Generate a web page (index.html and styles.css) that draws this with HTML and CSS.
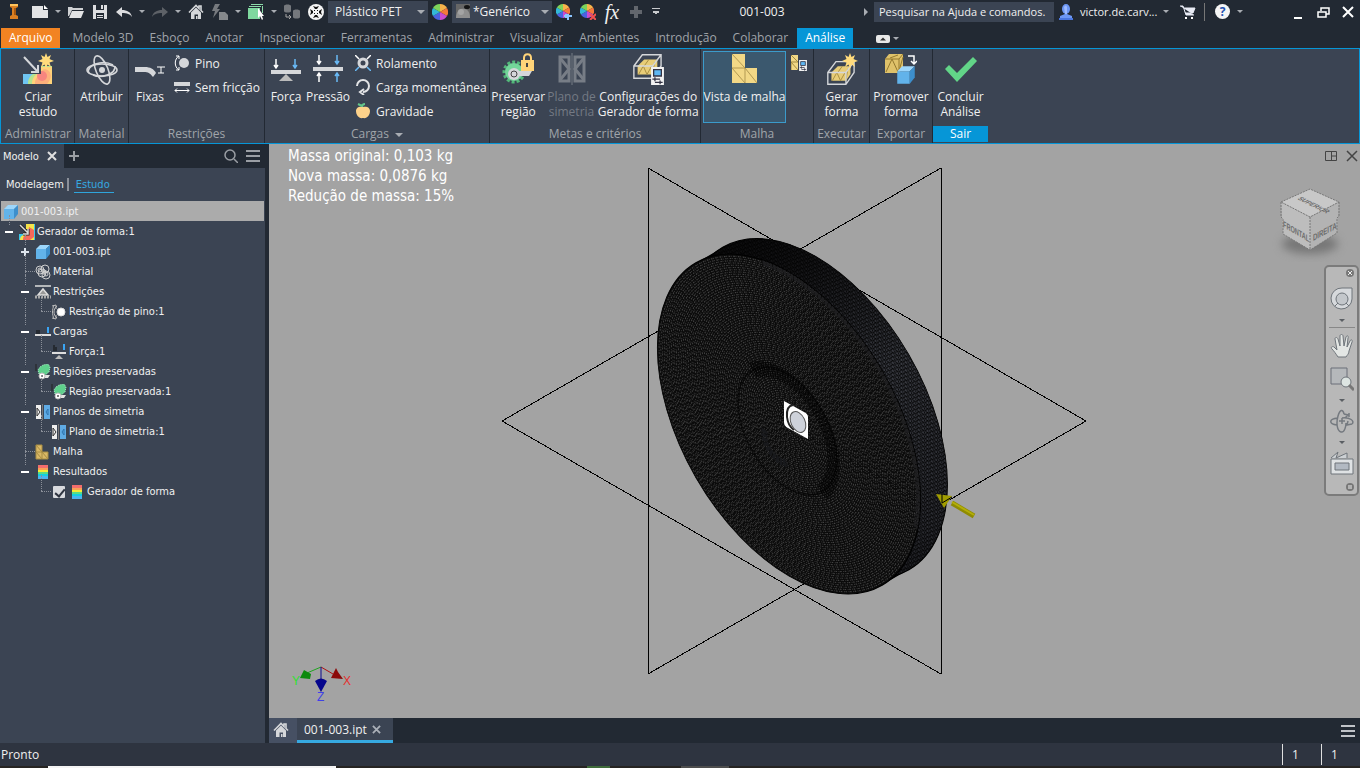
FILE: index.html
```html
<!DOCTYPE html>
<html lang="pt-BR">
  <head>
    <meta charset="UTF-8" />
    <title>001-003</title>
    <link rel="stylesheet" href="styles.css">
  </head>
  <body>
    <svg class="sprite" aria-hidden="true">
      <symbol id="i-home" viewBox="0 0 16 16">
        <path d="M1 8.5L8 1.5l3 3V2h2v4.500l2 2" fill="none" stroke="#d5d7da" stroke-width="1.600" />
        <path d="M3 8.500l5-5 5 5V15h-3v-4.500H6.500V15H3z" fill="#d5d7da" />
        <path d="M8 12h1.500v3H8z" fill="#d5d7da" />
      </symbol>
      <symbol id="i-wheel" viewBox="0 0 16 16">
        <path d="M8 8V0a8 8 0 0 1 7 4z" fill="#f7b34a" />
        <path d="M8 8l7-4a8 8 0 0 1 0 8z" fill="#f4783c" />
        <path d="M8 8l7 4a8 8 0 0 1-7 4z" fill="#c94bd0" />
        <path d="M8 8v8a8 8 0 0 1-7-4z" fill="#4b62e0" />
        <path d="M8 8l-7 4a8 8 0 0 1 0-8z" fill="#33b8d8" />
        <path d="M8 8L1 4a8 8 0 0 1 7-4z" fill="#7dd35a" />
      </symbol>
      <symbol id="i-cube" viewBox="0 0 16 16">
        <path d="M1 5h10v10H1z" fill="#62b3ea" />
        <path d="M1 5l4-4h10l-4 4z" fill="#9cd6fb" />
        <path d="M11 5l4-4v9l-4 5z" fill="#3d8fcc" />
      </symbol>
      <symbol id="i-rainbow" viewBox="0 0 16 16">
        <path d="M3 1h10v3H3z" fill="#f26d6d" />
        <path d="M3 4h10v2H3z" fill="#f9a255" />
        <path d="M3 6h10v2H3z" fill="#f6ea35" />
        <path d="M3 8h10v2H3z" fill="#59dd86" />
        <path d="M3 10h10v2H3z" fill="#13cfe0" />
        <path d="M3 12h10v3H3z" fill="#4ab4f0" />
      </symbol>
      <symbol id="i-gear" viewBox="0 0 16 16">
        <path d="M4 10L3 6l2-3 3-2 5-1 2 3-1 5-4 3-2-2z" fill="#5fd08c" stroke="#a8ecc4" stroke-dasharray="1 1" />
        <path d="M1 0v7" stroke="#222" />
        <path d="M8 11h7l-2 3H8z" fill="#e4e4e4" />
        <circle cx="7" cy="12" r="3" fill="#fff" stroke="#bbb" />
        <circle cx="7" cy="12" r="1" fill="#555" />
      </symbol>
      <symbol id="i-mirror" viewBox="0 0 16 16">
        <path d="M1 1h5v14H1z" fill="#eee" />
        <path d="M2 4l3 4-3 4z" fill="none" stroke="#333" />
        <path d="M7.500 0v16" stroke="#777" />
        <path d="M9 1h6v14H9z" fill="#5fabe5" />
        <path d="M13 5v6l-2-3z" fill="none" stroke="#2f75b0" />
      </symbol>
      <symbol id="i-load" viewBox="0 0 16 16">
        <path d="M1 8h14v2H1z" fill="#ddd" />
        <path d="M3 1v6M5 3v4" stroke="#111" />
        <path d="M13 0v6" stroke="#3aa5f5" stroke-width="2" />
        <path d="M4 15l4-4 4 4z" fill="#bbb" />
      </symbol>
      <symbol id="i-spark" viewBox="0 0 16 16">
        <path d="M8 0l1.500 4L13 2l-1.500 4L16 8l-4.500 1.500L13 14l-3.500-2.500L8 16l-1.500-4.500L3 14l1.500-4.500L0 8l4.500-2L3 2l3.500 2z" fill="#ffdb7c" />
      </symbol>
      <symbol id="i-crate" viewBox="0 0 32 32">
        <path d="M6 16L13 9h14l-5 7zM6 16h16v9H6zM22 16l5-7v9l-5 7z" fill="#e8cd78" />
        <path d="M7 25l5-9 4 9 5-9M13 16l5-7M22 25l2-13" fill="none" stroke="#a48a3e" />
        <path d="M2 16L11 4h20v12l-9 13H2zM2 16h20L31 4M22 16v13" fill="none" stroke="#d5d7da" stroke-width="1.500" />
      </symbol>
      <symbol id="i-mesh" viewBox="0 0 32 32">
        <path d="M3 1h13v14h12v15H3z" fill="#f2d886" />
        <path d="M3 1l13 14H3l13 15V15l12 15" fill="none" stroke="#b39a52" />
      </symbol>
      <symbol id="i-panel" viewBox="0 0 10 14">
        <path d="M0 0h10v14H0z" fill="#f2f2f2" />
        <path d="M2 2h6v5H2z" fill="#5eb7f2" stroke="#334" />
        <path d="M1 9.500h6M3 12h6M3 8v3M7 10.500v3" stroke="#334" />
      </symbol>
    </svg>

    <header class="titlebar">
      <div class="quick">
        <button class="logo" aria-label="Inventor">
          <svg viewBox="0 0 16 20"><path d="M4 3h8v3l-2 1v7l2 1v3H4v-3l2-1V7L4 6z" fill="#dc8022" /><path d="M4 3h8v2H4z" fill="#ffc45c" /><path d="M8 7h2v7H8z" fill="#a8580e" /></svg>
        </button>
        <button class="tool" aria-label="Novo"><svg viewBox="0 0 16 16"><path d="M0 2h11v4h5v8H0z" fill="#e2e3e5" /><path d="M12 1l4 4h-4z" fill="#fff" /></svg></button>
        <button class="caret" aria-label="Mais"></button>
        <button class="tool" aria-label="Abrir"><svg viewBox="0 0 16 16"><path d="M0 3h4l1 1h10v2H4L1 12H0z" fill="#cfd1d4" /><path d="M4 7h12l-3 7H1z" fill="#e2e3e5" /></svg></button>
        <button class="tool" aria-label="Salvar"><svg viewBox="0 0 16 16"><path d="M1 1h14v14H1z" fill="#dcdde0" /><path d="M4 1h8v5H4zM4 9h8v6H4z" fill="#222933" /><path d="M9 1h2v4H9zM5 11h6v1H5zM5 13h6v1H5z" fill="#dcdde0" /></svg></button>
        <button class="tool" aria-label="Desfazer"><svg viewBox="0 0 16 16"><path d="M0 8l6-5v3c5 0 9 2 10 7-2-3-5-4-10-4v4z" fill="#dcdde0" /></svg></button>
        <button class="caret" aria-label="Mais"></button>
        <button class="tool" aria-label="Refazer"><svg viewBox="0 0 16 16"><path d="M16 8l-6-5v3C5 6 1 8 0 13c2-3 5-4 10-4v4z" fill="#5d6167" /></svg></button>
        <button class="caret" aria-label="Mais"></button>
        <button class="tool" aria-label="Início"><svg><use href="#i-home" /></svg></button>
        <button class="tool" aria-label="Atualizar"><svg viewBox="0 0 16 16"><path d="M3 0h5L5 5h3L1 14l2-7H0z" fill="#777a7f" /><path d="M7 8h6l3 3v5H7z" fill="#85888c" /></svg></button>
        <button class="caret" aria-label="Mais"></button>
        <button class="tool" aria-label="Selecionar"><svg viewBox="0 0 16 16"><path d="M3 0h12v1H3zM1 2h12v1H1zM14 2h1v7h-1z" fill="#8cdcaa" /><path d="M0 4h12v11H0z" fill="#7fd99f" /><path d="M10 4v10l2-2 2 4 1-1-1-3h2z" fill="#fff" /></svg></button>
        <button class="caret" aria-label="Mais"></button>
        <button class="tool" aria-label="Banco de dados"><svg viewBox="0 0 16 16"><path d="M0 2c0-2 7-2 7 0v5c0 2-7 2-7 0zM9 7c0-2 7-2 7 0v6c0 2-7 2-7 0z" fill="#75787d" /><path d="M2 10v3h5M5 11l2 2-2 2" fill="none" stroke="#aaa" /></svg></button>
        <button class="tool" aria-label="Materiais"><svg viewBox="0 0 16 16"><circle cx="8" cy="8" r="8" fill="#f5f5f5" /><path d="M5 2l3 1 3-1-2 3H7zM5 14l3-1 3 1-2-3H7zM2 5l1 3-1 3 3-2V7zM14 5l-1 3 1 3-3-2V7zM6 6h1v1H6zM9 6h1v1H9zM6 9h1v1H6zM9 9h1v1H9z" fill="#111" /></svg></button>
        <label class="picker"><select aria-label="Material"><option>Plástico PET</option></select></label>
        <button class="tool" aria-label="Aparência"><svg><use href="#i-wheel" /></svg></button>
        <label class="picker with-swatch">
          <svg class="swatch" viewBox="0 0 14 14"><path d="M0 0h14v14H0z" fill="#666" /><path d="M0 14C0 6 5 4 9 5s5 5 5 9z" fill="#8f8f8f" /><circle cx="5" cy="8" r="3" fill="#a4a4a4" /><ellipse cx="11" cy="3" rx="3" ry="2" fill="#151515" /></svg>
          <select aria-label="Aparência"><option>*Genérico</option></select>
        </label>
        <button class="tool" aria-label="Ajustar"><svg viewBox="0 0 16 16"><use href="#i-wheel" width="14" height="14" /><path d="M8 12h8M12 10v6M10 10v4" stroke="#8bc4ff" stroke-width="2" /></svg></button>
        <button class="tool" aria-label="Limpar"><svg viewBox="0 0 16 16"><use href="#i-wheel" width="14" height="14" /><path d="M10 10l6 6M16 10l-6 6" stroke="#f15050" stroke-width="2" /></svg></button>
        <button class="tool fx" aria-label="Parâmetros">fx</button>
        <button class="tool" aria-label="Adicionar"><svg viewBox="0 0 16 16"><path d="M6 2h4v4h4v4h-4v4H6v-4H2V6h4z" fill="#62666d" /></svg></button>
        <button class="caret lined" aria-label="Personalizar"></button>
      </div>
      <div class="doc-title">001-003</div>
      <div class="account">
        <button class="caret right" aria-label="Expandir"></button>
        <input class="help-search" type="text" value="Pesquisar na Ajuda e comandos." aria-label="Pesquisar" />
        <svg class="user-icon" viewBox="0 0 16 16"><path d="M2 12l5-2h2l5 2v3H2z" fill="#6d97f5" /><ellipse cx="8" cy="5" rx="4" ry="5" fill="#6d97f5" /><path d="M6 3q2-3 3 0v7H7z" fill="#9dbaff" /><path d="M1 14h14v2H1z" fill="#4a76e0" /></svg>
        <button class="user">victor.de.carv...</button>
        <button class="caret" aria-label="Conta"></button>
        <button class="tool cart" aria-label="Loja"><svg viewBox="0 0 16 16"><path d="M0 2h3l3 9h8M4 4h11l-2 5H5" fill="#e8ebf5" stroke="#e8ebf5" /><path d="M5 13h2v2H5zM11 13h2v2h-2z" fill="#fff" /></svg></button>
        <span class="divider"></span>
        <button class="help" aria-label="Ajuda">?</button>
        <button class="caret" aria-label="Mais ajuda"></button>
        <div class="window-buttons">
          <button aria-label="Minimizar"><svg viewBox="0 0 16 16"><path d="M4 13h8v2H4z" fill="#fff" /></svg></button>
          <button aria-label="Restaurar"><svg viewBox="0 0 16 16"><path d="M6 7V4h8v6h-3M3 8h8v5H3z" fill="none" stroke="#fff" stroke-width="1.500" /></svg></button>
          <button aria-label="Fechar"><svg viewBox="0 0 16 16"><path d="M3 3l10 10M13 3L3 13" stroke="#fff" stroke-width="2" /></svg></button>
        </div>
      </div>
    </header>

    <nav class="tabs">
      <a class="tab file" href="#">Arquivo</a>
      <a class="tab" href="#">Modelo 3D</a>
      <a class="tab" href="#">Esboço</a>
      <a class="tab" href="#">Anotar</a>
      <a class="tab" href="#">Inspecionar</a>
      <a class="tab" href="#">Ferramentas</a>
      <a class="tab" href="#">Administrar</a>
      <a class="tab" href="#">Visualizar</a>
      <a class="tab" href="#">Ambientes</a>
      <a class="tab" href="#">Introdução</a>
      <a class="tab" href="#">Colaborar</a>
      <a class="tab active" href="#">Análise</a>
      <button class="collapse" aria-label="Recolher"><svg viewBox="0 0 14 8"><rect width="14" height="8" rx="2" fill="#e8e8e8" /><path d="M4 5.500l3-3 3 3z" fill="#333" /></svg></button>
      <button class="caret" aria-label="Mais"></button>
    </nav>

    <section class="ribbon">
      <div class="group g-admin">
        <div class="tools">
          <button class="big"><svg viewBox="0 0 32 32"><path d="M1 21h18v-8h11v18H1z" fill="#6fc6f3" /><path d="M6 31c0-5 2-8 5-10h8v-8h11v18z" fill="#b4e38f" /><path d="M10 31c0-5 2-8 5-10h4v-7h11v17z" fill="#ffd37a" /><path d="M13 31c0-4 1-7 6-10 0-5 4-6 8-3 3 4 2 9-2 13z" fill="#fdb07c" /><circle cx="20" cy="23" r="5" fill="#f7857f" /><path d="M1 12h18v9H1z" fill="#3b4453" /><path d="M2 4l13 14M16 12v7H9" fill="none" stroke="#d5d7da" stroke-width="2" /><use href="#i-spark" x="16" y="0" width="16" height="16" /></svg><span>Criar<br>estudo</span></button>
        </div>
        <h2>Administrar</h2>
      </div>
      <div class="group g-material">
        <div class="tools">
          <button class="big"><svg viewBox="0 0 32 32"><g fill="none" stroke="#d5d7da" stroke-width="1.600"><ellipse cx="16" cy="17" rx="15" ry="6" /><ellipse cx="16" cy="17" rx="15" ry="6" transform="rotate(68 16 17)" /><path d="M3 20c-4-7 13-14 24-8M7 22c8 4 23-1 22-9" /></g><circle cx="16" cy="17" r="3" fill="#d5d7da" /></svg><span>Atribuir</span></button>
        </div>
        <h2>Material</h2>
      </div>
      <div class="group g-constraints">
        <div class="tools">
          <button class="big"><svg viewBox="0 0 32 32"><path d="M1 14h10c5 0 9 2 11 6l-3 4c-3-4-5-5-9-5H1z" fill="#d5d7da" /><path d="M23 14h8M27 14v6M24 20h6" fill="none" stroke="#fff" /></svg><span>Fixas</span></button>
          <div class="stack">
            <button class="small"><svg viewBox="0 0 16 16"><circle cx="10" cy="8" r="5" fill="#d5d7da" /><path d="M5 1C0 4 0 12 5 15M2 1h3v3M2 15h3v-3" fill="none" stroke="#fff" /></svg>Pino</button>
            <button class="small"><svg viewBox="0 0 16 16"><path d="M0 3h16v4H0z" fill="#d5d7da" /><path d="M1 11.500h14M3 9.500l-2 2 2 2M13 9.500l2 2-2 2" fill="none" stroke="#fff" /></svg>Sem fricção</button>
          </div>
        </div>
        <h2>Restrições</h2>
      </div>
      <div class="group g-loads">
        <div class="tools">
          <button class="big"><svg viewBox="0 0 32 32"><path d="M1 17h30v4H1z" fill="#d5d7da" /><path d="M16 21l7 7H9z" fill="#bbb" /><path d="M6 6v9M4 12l2 3 2-3" fill="none" stroke="#fff" stroke-width="1.500" /><path d="M25 6v9M23 12l2 3 2-3" fill="none" stroke="#69b9f5" stroke-width="1.500" /></svg><span>Força</span></button>
          <button class="big"><svg viewBox="0 0 32 32"><path d="M1 14h30v4H1z" fill="#d5d7da" /><path d="M7 2v9M5 8l2 3 2-3M7 29v-9M5 23l2-3 2 3" fill="none" stroke="#fff" stroke-width="1.500" /><path d="M25 2v9M23 8l2 3 2-3M25 29v-9M23 23l2-3 2 3" fill="none" stroke="#69b9f5" stroke-width="1.500" /></svg><span>Pressão</span></button>
          <div class="stack">
            <button class="small"><svg viewBox="0 0 16 16"><circle cx="8" cy="8" r="4" fill="none" stroke="#d5d7da" stroke-width="3" /><path d="M0 0l4 4M16 0l-4 4" stroke="#fff" stroke-width="1.500" /><path d="M0 16l4-4M16 16l-4-4" stroke="#69b9f5" stroke-width="1.500" /></svg>Rolamento</button>
            <button class="small"><svg viewBox="0 0 16 16"><path d="M2 7a6 6 0 1 1 6 6M9 10l-4 3 4 3" fill="none" stroke="#e3e4e6" stroke-width="2" /></svg>Carga momentânea</button>
            <button class="small"><svg viewBox="0 0 16 16"><path d="M8 4c3-1 7 0 7 4s-3 8-7 7c-4 1-7-3-7-7s4-5 7-4z" fill="#fdd28a" /><path d="M7 4c0-2 1-3 3-3M3 1l4 2" fill="none" stroke="#64c48a" stroke-width="2" /></svg>Gravidade</button>
          </div>
        </div>
        <h2>Cargas <span class="caret-mark"></span></h2>
      </div>
      <div class="group g-goals">
        <div class="tools">
          <button class="big"><svg viewBox="0 0 32 32"><circle cx="12" cy="19" r="10" fill="none" stroke="#53b97a" stroke-width="3" stroke-dasharray="3 2" /><circle cx="12" cy="19" r="9" fill="#73d69a" /><circle cx="12" cy="21" r="6" fill="#d5d7da" /><path d="M12 18h18l-3 5H13z" fill="#d5d7da" /><circle cx="12" cy="21" r="3" fill="none" stroke="#444" /><path d="M19 7h13v11H19z" fill="#ffd479" /><path d="M22 7V5c0-5 7-5 7 0v4" fill="none" stroke="#ffd479" stroke-width="2" /><path d="M25 10v4" stroke="#444" stroke-width="2" /></svg><span>Preservar<br>região</span></button>
          <button class="big" disabled><svg viewBox="0 0 32 32"><path d="M4 4h9v24H4zM19 4h9v24h-9z" fill="none" stroke="#777d86" stroke-width="3" /><path d="M4 5l9 11-9 11M28 5l-9 11 9 11" fill="none" stroke="#777d86" stroke-width="3" /><path d="M16 0v32" stroke="#777d86" /></svg><span>Plano de<br>simetria</span></button>
          <button class="big"><svg viewBox="0 0 32 32"><use href="#i-crate" y="-3" width="30" height="32" /><use href="#i-panel" x="19" y="14" width="13" height="18" /></svg><span>Configurações do<br>Gerador de forma</span></button>
        </div>
        <h2>Metas e critérios</h2>
      </div>
      <div class="group g-mesh">
        <div class="tools">
          <button class="big pressed"><svg><use href="#i-mesh" /></svg><span>Vista de malha</span></button>
          <button class="small" aria-label="Configurações de malha"><svg viewBox="0 0 16 16"><path d="M0 0h7v15H0z" fill="#f2d886" /><path d="M0 0l7 7H0l7 8M0 15V7" fill="none" stroke="#a48a3e" /><use href="#i-panel" x="8" y="5" width="8" height="11" /></svg></button>
        </div>
        <h2>Malha</h2>
      </div>
      <div class="group g-run">
        <div class="tools">
          <button class="big"><svg viewBox="0 0 32 32"><use href="#i-crate" y="5" width="29" height="29" /><use href="#i-spark" x="16" y="0" width="16" height="16" /></svg><span>Gerar<br>forma</span></button>
        </div>
        <h2>Executar</h2>
      </div>
      <div class="group g-export">
        <div class="tools">
          <button class="big"><svg viewBox="0 0 32 32"><path d="M0 6l4-5h14v13l-4 6H0z" fill="#dfc26a" /><path d="M0 6h14v14M14 6l4-5M1 19L7 6l6 13M14 18l4-14M5 5l8-3" fill="none" stroke="#94792e" /><use href="#i-cube" x="11" y="12" width="20" height="20" /><path d="M23 3h6v8M26 8l3 3 3-3" fill="none" stroke="#fff" stroke-width="1.500" /></svg><span>Promover<br>forma</span></button>
        </div>
        <h2>Exportar</h2>
      </div>
      <div class="group g-exit">
        <div class="tools">
          <button class="big"><svg viewBox="0 0 32 32"><path d="M0 16l4-4 8 8L28 4l4 4-20 21z" fill="#62d588" /></svg><span>Concluir<br>Análise</span></button>
        </div>
        <h2>Sair</h2>
      </div>
    </section>

    <div class="workspace">
      <aside class="browser">
        <div class="browser-tabs">
          <button class="browser-tab">Modelo <svg viewBox="0 0 10 10"><path d="M1 1l8 8M9 1L1 9" stroke="#e0e0e0" stroke-width="2" /></svg></button>
          <button class="add" aria-label="Adicionar"><svg viewBox="0 0 10 10"><path d="M5 0v10M0 5h10" stroke="#9a9ea4" stroke-width="2" /></svg></button>
          <button class="search" aria-label="Pesquisar"><svg viewBox="0 0 14 14"><circle cx="6" cy="6" r="5" fill="none" stroke="#9a9ea4" stroke-width="1.500" /><path d="M10 10l4 4" stroke="#9a9ea4" stroke-width="1.500" /></svg></button>
          <button class="menu" aria-label="Menu"><svg viewBox="0 0 14 12"><path d="M0 1h14M0 6h14M0 11h14" stroke="#9a9ea4" stroke-width="2" /></svg></button>
        </div>
        <div class="modes">
          <a href="#">Modelagem</a>
          <a class="current" href="#">Estudo</a>
        </div>
        <div class="row root"><svg><use href="#i-cube" /></svg>001-003.ipt</div>
        <ul class="tree">
          <li>
            <div class="row"><button class="toggle" aria-label="Recolher"></button><svg viewBox="0 0 16 16"><path d="M0 10h7V0h9v16H0z" fill="#39c7e8" /><path d="M1 16c0-4 3-5 6-6V0h8v16z" fill="#f5e34a" /><path d="M4 16c0-4 2-5 5-6l1-7 5 3v7l-4 3z" fill="#f6695a" /><path d="M1 1l8 8M9 5v5H4" fill="none" stroke="#222" stroke-width="3" /><path d="M1 1l8 8M9 5v5H4" fill="none" stroke="#ddd" stroke-width="1.500" /></svg>Gerador de forma:1</div>
            <ul>
              <li>
                <div class="row"><button class="toggle plus" aria-label="Expandir"></button><svg><use href="#i-cube" /></svg>001-003.ipt</div>
              </li>
              <li>
                <div class="row"><span class="leaf"></span><svg viewBox="0 0 16 16"><g fill="none" stroke="#ccc"><circle cx="5" cy="6" r="4" /><circle cx="10" cy="5" r="4" /><circle cx="7" cy="9" r="4" /><circle cx="11" cy="11" r="4" /><circle cx="9" cy="8" r="2" /><circle cx="5" cy="6" r="2" /><circle cx="11" cy="10" r="2" /></g></svg>Material</div>
              </li>
              <li>
                <div class="row"><button class="toggle" aria-label="Recolher"></button><svg viewBox="0 0 16 16"><path d="M0 2h16M3 11l5-6 5 6z" fill="#999" stroke="#ddd" stroke-width="1.500" /><path d="M0 13h16" stroke="#aaa" stroke-width="3" stroke-dasharray="2 1" /></svg>Restrições</div>
                <ul>
                  <li>
                    <div class="row"><span class="leaf"></span><svg viewBox="0 0 16 16"><circle cx="10" cy="8" r="4" fill="#fff" stroke="#ddd" /><path d="M3 1c-2 5-2 9 0 14M6 2C2 5 2 11 6 14M1 2l4-1v4M1 14l4 1v-4" fill="none" stroke="#bbb" /></svg>Restrição de pino:1</div>
                  </li>
                </ul>
              </li>
              <li>
                <div class="row"><button class="toggle" aria-label="Recolher"></button><svg viewBox="0 0 16 16"><path d="M0 10h16v2H0z" fill="#ddd" /><path d="M2 6v4M4 6v4" stroke="#111" /><path d="M13 3v6" stroke="#3aa5f5" stroke-width="2" /></svg>Cargas</div>
                <ul>
                  <li>
                    <div class="row"><span class="leaf"></span><svg><use href="#i-load" /></svg>Força:1</div>
                  </li>
                </ul>
              </li>
              <li>
                <div class="row"><button class="toggle" aria-label="Recolher"></button><svg><use href="#i-gear" /></svg>Regiões preservadas</div>
                <ul>
                  <li>
                    <div class="row"><span class="leaf"></span><svg><use href="#i-gear" /></svg>Região preservada:1</div>
                  </li>
                </ul>
              </li>
              <li>
                <div class="row"><button class="toggle" aria-label="Recolher"></button><svg><use href="#i-mirror" /></svg>Planos de simetria</div>
                <ul>
                  <li>
                    <div class="row"><span class="leaf"></span><svg><use href="#i-mirror" /></svg>Plano de simetria:1</div>
                  </li>
                </ul>
              </li>
              <li>
                <div class="row"><span class="leaf"></span><svg viewBox="0 0 16 16"><path d="M1 1h6v7h6v7H1z" fill="#d9b866" stroke="#a88c42" /><path d="M1 1l6 7M1 8l6 7M7 8l6 7M1 8h6v7" fill="none" stroke="#a88c42" /></svg>Malha</div>
              </li>
              <li>
                <div class="row"><button class="toggle" aria-label="Recolher"></button><svg><use href="#i-rainbow" /></svg>Resultados</div>
                <ul>
                  <li>
                    <label class="row result"><span class="leaf"></span><input type="checkbox" checked /><svg><use href="#i-rainbow" /></svg>Gerador de forma</label>
                  </li>
                </ul>
              </li>
            </ul>
          </li>
        </ul>
      </aside>

      <main class="stage">
        <div class="viewport">
          <svg class="scene" viewBox="0 0 1091 574">
            <defs>
              <linearGradient id="rim" x1="0" y1="0" x2="1" y2="1">
                <stop offset="0" stop-color="#000" />
                <stop offset=".25" stop-color="#141416" />
                <stop offset=".5" stop-color="#393b42" />
                <stop offset=".8" stop-color="#2c2d33" />
                <stop offset="1" stop-color="#000" />
              </linearGradient>
              <pattern id="rim-mesh" width="5" height="4" patternUnits="userSpaceOnUse">
                <path d="M0 0h5M0 0l2.500 4L5 0" fill="none" stroke="#000" stroke-width="1" />
              </pattern>
            </defs>
            <!-- work planes -->
            <path d="M379.500 24v506M672.500 24v506M379 24l438 253-438 253M672 24L233 277l439 253" fill="none" stroke="#000" shape-rendering="crispEdges" />
            <!-- disc, drawn flat and projected to the isometric plane -->
            <g transform="matrix(.866 .5 0 1 520 280)">
              <path d="M-107-107L-76-138 138 76 107 107z" fill="#000" stroke="#000" />
              <circle cx="31" cy="-31" r="152" fill="url(#rim)" />
              <circle cx="31" cy="-31" r="152" fill="url(#rim-mesh)" stroke="#000" />
              <circle r="152" fill="#0b0b0b" stroke="#000" />
              <g id="mesh"></g>
              <path d="M-30-146A149 149 0 0 1 146 30" fill="none" stroke="#1e1e20" stroke-width="5" stroke-dasharray="3 1" />
              <circle cx="-2" cy="8" r="57" fill="none" stroke="#000" stroke-width="2" opacity=".5" />
              <path d="M-42-33A58 58 0 0 1 38 50" fill="none" stroke="#000" stroke-width="14" stroke-dasharray="2 1" opacity=".6" />
              <path d="M-28 20a18 18 0 0 0 26 20" fill="none" stroke="#18191c" stroke-width="7" stroke-dasharray="3 1" />
            </g>
            <!-- pin constraint glyph -->
            <path d="M515 257l20 11q4 2 4 5v22l-20-11q-4-2-4-6z" fill="#fff" />
            <path d="M524 261q-7 1-6 12 1 9 7 13" fill="none" stroke="#222" stroke-width="2" />
            <ellipse cx="529" cy="278" rx="7" ry="11" transform="rotate(-25 529 278)" fill="#ced2da" stroke="#555" />
            <!-- force arrow -->
            <path d="M683 359l22 13" stroke="#8f8b00" stroke-width="5" />
            <path d="M683 358l22 13" stroke="#b3ae08" stroke-width="2" />
            <path d="M667 350l16 2-8 12z" fill="#a09c00" />
            <path d="M673 350v9l10-6" fill="none" stroke="#000" />
          </svg>
          <div class="mass">
            <p>Massa original: 0,103 kg</p>
            <p>Nova massa: 0,0876 kg</p>
            <p>Redução de massa: 15%</p>
          </div>
          <svg class="triad" viewBox="0 0 60 40">
            <path d="M28 3L14 9" stroke="#1fa51f" /><path d="M11 6l7 4-1 5-10-1z" fill="#0d8a0d" />
            <path d="M28 3l12 7" stroke="#b01010" /><path d="M43 4l2 4 5 7-12-1z" fill="#8c0a0a" />
            <path d="M28 3v15" stroke="#0a0a90" /><path d="M22 17q6-5 12 0l-6 11z" fill="#05058c" />
            <text x="-1" y="21" fill="#30e030">Y</text><text x="50" y="21" fill="#e33030">X</text><text x="24" y="37" fill="#4040e8">Z</text>
          </svg>
          <div class="view-buttons">
            <button aria-label="Organizar"><svg viewBox="0 0 12 12"><path d="M.5 1.500h11v9H.5zM6.500 1v10M6.500 6H11" fill="none" stroke="#444" /></svg></button>
            <button aria-label="Fechar"><svg viewBox="0 0 12 12"><path d="M1 1l10 10M11 1L1 11" stroke="#444" stroke-width="1.500" /></svg></button>
          </div>
          <svg class="view-cube" viewBox="0 0 80 76">
            <ellipse cx="40" cy="58" rx="28" ry="10" fill="#777" class="cube-shadow" />
            <path d="M11 16L40 3l29 13-29 15z" fill="#c8c8c8" />
            <path d="M11 16l29 15v33L13 48z" fill="#bdbdbd" />
            <path d="M69 16L40 31v33l27-17z" fill="#b3b3b3" />
            <path d="M11 16L40 3l29 13-29 15zM11 16v15l2 2v15l27 16 27-17V32l2-2V16M40 31v33" fill="none" stroke="#777" stroke-dasharray="2 1" />
            <text transform="matrix(.8 .46 0 1.300 13 41)">FRONTAL</text>
            <text transform="matrix(.86 -.46 0 1.300 43 55)">DIREITA</text>
            <text transform="matrix(.8 .4 -.9 .5 27 13)">SUPERIOR</text>
          </svg>
          <div class="nav-bar">
            <button class="nav-dot" aria-label="Fechar barra"><svg viewBox="0 0 8 8"><circle cx="4" cy="4" r="4" fill="#777" /><path d="M2 2l4 4M6 2L2 6" stroke="#eee" /></svg></button>
            <button class="nav-tool wheel" aria-label="Roda de navegação"><svg viewBox="0 0 24 24"><path d="M12 1h10v11a10.500 10.500 0 1 1-10-11z" fill="#d6d9dc" stroke="#6f757b" /><circle cx="12" cy="12" r="6" fill="#c3c7cb" stroke="#6f757b" /><path d="M8 16l-3 3M16 16l3 3" stroke="#6f757b" /></svg></button>
            <button class="caret dark" aria-label="Mais"></button>
            <span class="nav-line"></span>
            <button class="nav-tool hand" aria-label="Pan"><svg viewBox="0 0 24 24"><path d="M8 23c-2-3-4-6-6-8-2-2 1-3 2-2l3 3L5 5c0-2 2-2 3 0l2 7V2c0-2 3-2 3 0l1 10 2-9c1-2 3-1 2 1l-1 9 3-6c1-2 3-1 2 1l-3 9c0 3-2 4-3 6z" fill="#e3e6e4" stroke="#6f757b" /></svg></button>
            <button class="nav-tool" aria-label="Zoom"><svg viewBox="0 0 24 24"><path d="M1 1h16v16H1z" fill="#b5b8bb" stroke="#6a6e78" /><circle cx="16" cy="15" r="5" fill="#dde5e2" stroke="#6f757b" /><path d="M19 18l5 5" stroke="#777" stroke-width="3" /></svg></button>
            <button class="caret dark" aria-label="Mais"></button>
            <button class="nav-tool" aria-label="Órbita"><svg viewBox="0 0 24 24"><g fill="none" stroke="#74797f" stroke-width="1.500"><path d="M14 5c-1-5-4-5-6 2s-1 15 3 16 5-7 5-9M7 16c-8-1-9-6 1-7M12 9c8-1 13 3 10 6M14 5l4 1-3 3M19 4v4M22 15l-5 1 1-4M9 12h6M12 9v6" /></g></svg></button>
            <button class="caret dark" aria-label="Mais"></button>
            <button class="nav-tool" aria-label="Face"><svg viewBox="0 0 24 24"><path d="M1 7l7-6-2 6 11-5v5" fill="#ccd0d3" stroke="#6f757b" /><path d="M1 8h22v15H1z" fill="#dfe2e4" stroke="#6f757b" /><path d="M5 12h14v7H5z" fill="#b2b9c2" stroke="#6f757b" /></svg></button>
            <button class="nav-dot end" aria-label="Opções"><svg viewBox="0 0 8 8"><circle cx="4" cy="4" r="4" fill="#777" /><path d="M2 3h4M2 5h4" stroke="#eee" /></svg></button>
          </div>
        </div>
        <div class="doc-tabs">
          <button class="doc-home" aria-label="Início"><svg><use href="#i-home" /></svg></button>
          <button class="doc-tab">001-003.ipt <svg viewBox="0 0 10 10"><path d="M1 1l8 8M9 1L1 9" stroke="#aab0b8" stroke-width="2" /></svg></button>
          <button class="menu" aria-label="Documentos"><svg viewBox="0 0 14 12"><path d="M0 1h14M0 6h14M0 11h14" stroke="#c0c3c8" stroke-width="2" /></svg></button>
        </div>
      </main>
    </div>

    <footer class="status">
      <span class="message">Pronto</span>
      <span class="count">1</span>
      <span class="count">1</span>
    </footer>
    <div class="taskbar"><span class="task-search"></span><span class="task-green"></span><span class="task-active"></span></div>

    <script>
      // surface mesh of the disc: dashed rings, each shifted against the last
      const mesh = document.getElementById("mesh");
      for (let r = 2; r < 151; r += 2) {
        const ring = document.createElementNS("http://www.w3.org/2000/svg", "circle");
        ring.setAttribute("r", r);
        ring.setAttribute("class", "ring");
        ring.setAttribute("stroke-dashoffset", (r * r * 7) % 11);
        mesh.appendChild(ring);
      }
    </script>
  </body>
</html>
```
FILE: styles.css
```css
* {
  box-sizing: border-box;
}

body {
  margin: 0;
  height: 100vh;
  display: flex;
  flex-direction: column;
  overflow: hidden;
  background: #222933;
  color: #f0f0f0;
  font-family: "Open Sans", "Noto Sans", sans-serif;
  font-size: 12px;
}

button {
  margin: 0;
  padding: 0;
  border: none;
  background: none;
  color: inherit;
  font: inherit;
}

a {
  color: inherit;
  text-decoration: none;
}

.sprite {
  position: absolute;
  width: 0;
  height: 0;
}

/* title bar */
.titlebar {
  flex: none;
  display: flex;
  align-items: center;
  height: 23px;
}

.quick,
.account {
  flex: none;
  display: flex;
  align-items: center;
}

.logo {
  width: 28px;
  height: 22px;
}

.logo svg {
  width: 16px;
  height: 20px;
}

.tool {
  width: 24px;
  height: 22px;
  display: flex;
  align-items: center;
  justify-content: center;
}

.tool svg {
  width: 16px;
  height: 16px;
}

.fx {
  font: italic 20px/20px "Liberation Serif", serif;
}

.caret {
  width: 12px;
  height: 20px;
  display: flex;
  align-items: center;
  justify-content: center;
}

.caret::before,
.caret-mark,
.picker::after {
  content: "";
  border: 3px solid transparent;
  border-top-color: #a9adb3;
  border-bottom: none;
}

.caret.right::before {
  border: 4px solid transparent;
  border-left-color: #a9adb3;
  border-right: none;
}

.caret.lined {
  width: 16px;
}

.caret.lined::before {
  width: 8px;
  height: 7px;
  border: none;
  border-top: 1px solid #c8cacd;
  background: linear-gradient(#c8cacd, #c8cacd) center 2px / 6px 2px no-repeat,
    linear-gradient(#c8cacd, #c8cacd) center 4px / 2px 1px no-repeat;
}

.caret.dark::before {
  border-top-color: #5a5e63;
}

.picker {
  position: relative;
  width: 100px;
}

.picker select {
  appearance: none;
  width: 100%;
  height: 22px;
  padding: 0 20px 0 7px;
  border: none;
  background: #3b4453;
  color: inherit;
  font: inherit;
}

.picker::after {
  position: absolute;
  right: 3px;
  top: 9px;
  border-width: 4px;
  border-bottom: none;
}

.picker.with-swatch select {
  padding-left: 21px;
}

.swatch {
  position: absolute;
  left: 4px;
  top: 3px;
  width: 14px;
  height: 14px;
}

.doc-title {
  flex: 1;
  text-align: center;
}

.help-search {
  width: 180px;
  height: 20px;
  margin-left: 2px;
  padding: 0 5px;
  border: none;
  background: #3b4453;
  color: inherit;
  font: inherit;
  font-size: 11px;
}

.user-icon {
  width: 16px;
  height: 16px;
  margin: 0 6px 0 4px;
}

.user {
  width: 80px;
  font-size: 11px;
  text-align: left;
  white-space: nowrap;
}

.cart {
  margin: 0 4px;
}

.divider {
  width: 1px;
  height: 18px;
  background: #777;
}

.help {
  width: 15px;
  height: 15px;
  margin: 0 4px 0 10px;
  border-radius: 50%;
  background: #f5f5f5;
  color: #2350b0;
  font-weight: bold;
  line-height: 15px;
}

.window-buttons {
  display: flex;
  gap: 9px;
  margin: 0 4px 0 44px;
}

.window-buttons svg {
  display: block;
  width: 16px;
  height: 16px;
}

/* ribbon tabs */
.tabs {
  flex: none;
  display: flex;
  align-items: flex-end;
  height: 25px;
  padding-left: 1px;
  color: #a0a4aa;
}

.tab {
  height: 20px;
  padding: 0 8px;
  line-height: 20px;
  white-space: nowrap;
}

.tab.file {
  margin-right: 4px;
  background: #f28322;
  color: #fff;
}

.tab.active {
  margin-left: 1px;
  background: #0696d7;
  color: #fff;
}

.collapse {
  height: 20px;
  margin-left: 23px;
}

.collapse svg {
  width: 14px;
  height: 8px;
}

/* ribbon */
.ribbon {
  flex: none;
  display: flex;
  height: 96px;
  padding-left: 1px;
  border: 1px solid #0696d7;
  background: #3b4453;
}

.group {
  flex: none;
  display: flex;
  flex-direction: column;
  border-right: 1px solid #222933;
}

.group h2 {
  margin: 0 0 1px;
  height: 16px;
  color: #a0a4aa;
  font-size: 12px;
  font-weight: normal;
  line-height: 15px;
  text-align: center;
}

.tools {
  flex: 1;
  display: flex;
  align-items: flex-start;
  justify-content: center;
  padding-top: 2px;
}

.big {
  flex: none;
  height: 72px;
  display: flex;
  flex-direction: column;
  align-items: center;
  gap: 4px;
  padding-top: 2px;
  line-height: 15px;
  white-space: nowrap;
}

.big svg {
  width: 32px;
  height: 32px;
}

.big:disabled {
  color: #747a84;
}

.big.pressed {
  width: 83px;
  padding-top: 1px;
  border: 1px solid #3b9bcb;
  background: #3b586e;
}

.small {
  height: 24px;
  display: flex;
  align-items: center;
  gap: 5px;
  white-space: nowrap;
}

.small svg {
  width: 16px;
  height: 16px;
}

.g-admin {
  width: 73px;
}

.g-material {
  width: 54px;
}

.g-constraints {
  width: 136px;
}

.g-loads {
  width: 225px;
}

.g-goals {
  width: 211px;
}

.g-mesh {
  width: 113px;
}

.g-run {
  width: 56px;
}

.g-export {
  width: 63px;
}

.g-exit {
  width: 55px;
  border-right: none;
}

.g-constraints .tools,
.g-loads .tools,
.g-mesh .tools {
  justify-content: flex-start;
  padding-left: 2px;
}

.g-constraints .big {
  width: 38px;
  margin-right: 5px;
}

.g-loads .big {
  width: 42px;
}

.g-loads .tools {
  padding-left: 0;
}

.g-loads .stack {
  margin-left: 6px;
}

.g-goals .tools {
  gap: 2px;
}

.g-mesh .small {
  margin-left: 5px;
}

.g-exit h2 {
  background: #0696d7;
  color: #fff;
}

.caret-mark {
  display: inline-block;
  margin-left: 3px;
  border-width: 4px;
  border-bottom: none;
  vertical-align: middle;
}

/* model browser */
.workspace {
  flex: 1;
  display: flex;
  min-height: 0;
}

.browser {
  flex: none;
  width: 265px;
  background: #3b4453;
  font-family: "DejaVu Sans Condensed", "Noto Sans", sans-serif;
  font-size: 11px;
}

.browser-tabs {
  display: flex;
  align-items: center;
  height: 24px;
  padding-right: 5px;
  background: #222933;
}

.browser-tab {
  display: flex;
  align-items: center;
  justify-content: space-between;
  width: 64px;
  height: 24px;
  padding: 0 7px 0 3px;
  background: #3b4453;
}

.browser-tab svg,
.add svg {
  display: block;
  width: 10px;
  height: 10px;
}

.add {
  margin-left: 5px;
}

.search {
  margin-left: auto;
}

.search svg,
.menu svg {
  display: block;
  width: 14px;
  height: 14px;
}

.menu {
  margin-left: 8px;
}

.modes {
  display: flex;
  align-items: center;
  height: 33px;
  padding: 0 6px;
}

.modes a {
  padding-right: 3px;
  border-right: 2px solid #8b9099;
}

.modes .current {
  margin-left: 5px;
  padding: 1px 4px 1px 2px;
  border-right: none;
  border-bottom: 1px solid #2fa5dc;
  color: #36a9e1;
}

.tree,
.tree ul {
  margin: 0;
  padding: 0;
  list-style: none;
}

.tree ul {
  padding-left: 16px;
}

.tree li {
  position: relative;
}

.tree li::before {
  content: "";
  position: absolute;
  left: 9px;
  top: -6px;
  height: 16px;
  border-left: 1px dotted #8b9099;
}

.tree li:not(:last-child)::before {
  height: 100%;
}

.row {
  display: flex;
  align-items: center;
  height: 20px;
  padding: 1px 0 0 3px;
  white-space: nowrap;
}

.row svg {
  flex: none;
  width: 16px;
  height: 16px;
  margin-right: 2px;
}

.row.root {
  margin: 0 1px;
  padding-left: 2px;
  background: #ababab;
}

.toggle {
  position: relative;
  width: 12px;
  height: 12px;
  margin-right: 4px;
  background: linear-gradient(#fff, #fff) 2px 5px / 8px 2px no-repeat #3b4453;
}

.toggle.plus {
  background: linear-gradient(#dde5ee, #dde5ee) 2px 5px / 8px 2px no-repeat,
    linear-gradient(#dde5ee, #dde5ee) 5px 2px / 2px 8px no-repeat #3b4453;
}

.leaf {
  width: 10px;
  margin-left: 6px;
  border-top: 1px dotted #8b9099;
}

.result input {
  appearance: none;
  width: 12px;
  height: 12px;
  margin: 0 4px 0 2px;
  background: #d8dade;
  border-radius: 1px;
  position: relative;
}

.result input:checked::after {
  content: "";
  position: absolute;
  left: 4px;
  top: 1px;
  width: 4px;
  height: 8px;
  border: solid #2e3440;
  border-width: 0 2px 2px 0;
  transform: rotate(40deg);
}

/* graphics window */
.stage {
  flex: 1;
  min-width: 0;
  display: flex;
  flex-direction: column;
  margin-left: 4px;
}

.viewport {
  flex: 1;
  position: relative;
  min-height: 0;
  background: #a3a3a3;
}

.scene {
  position: absolute;
  inset: 0;
  width: 100%;
  height: 100%;
}

.ring {
  fill: none;
  stroke: #424242;
  stroke-width: 1px;
  stroke-dasharray: 2px 1px 1px 2px;
}

.mass {
  position: absolute;
  left: 19px;
  top: 2px;
  color: #fff;
  font-family: "DejaVu Sans Condensed", "DejaVu Sans", sans-serif;
  font-size: 15px;
  line-height: 20px;
}

.mass p {
  margin: 0;
}

.triad {
  position: absolute;
  left: 24px;
  bottom: 14px;
  width: 60px;
  height: 40px;
  overflow: visible;
  font-family: "Liberation Sans", sans-serif;
  font-size: 12px;
}

.view-buttons {
  position: absolute;
  top: 6px;
  right: 2px;
  display: flex;
  gap: 9px;
}

.view-buttons svg {
  display: block;
  width: 12px;
  height: 12px;
}

.view-cube {
  position: absolute;
  right: 10px;
  top: 42px;
  width: 80px;
  height: 76px;
  fill: #6c6c6c;
  font-family: "Liberation Sans", sans-serif;
  font-size: 7px;
  font-weight: bold;
}

.cube-shadow {
  filter: blur(4px);
}

.nav-bar {
  position: absolute;
  right: 1px;
  top: 121px;
  width: 35px;
  height: 231px;
  display: flex;
  flex-direction: column;
  align-items: center;
  border: 2px solid #7b7b7b;
  border-radius: 5px;
  background: #b8b8b8;
}

.nav-dot {
  align-self: flex-end;
  margin: 2px 3px 0 0;
}

.nav-dot.end {
  margin-top: auto;
  margin-bottom: 3px;
}

.nav-dot svg {
  display: block;
  width: 8px;
  height: 8px;
}

.nav-tool {
  margin-top: 3px;
}

.nav-tool svg {
  display: block;
  width: 24px;
  height: 24px;
}

.nav-tool.wheel {
  margin-top: 10px;
}

.nav-bar .caret {
  height: 15px;
  padding-top: 4px;
}

.nav-line {
  width: 26px;
  height: 1px;
  margin-top: 1px;
  background: #888;
}

.nav-tool.hand {
  margin: 6px 0;
}

/* document tabs */
.doc-tabs {
  flex: none;
  display: flex;
  align-items: center;
  height: 25px;
  padding-right: 5px;
}

.doc-home {
  width: 28px;
  height: 25px;
  padding: 4px 4px 5px;
  background: #465063;
}

.doc-home svg {
  display: block;
  width: 16px;
  height: 16px;
}

.doc-tab {
  display: flex;
  align-items: center;
  gap: 5px;
  height: 25px;
  width: 96px;
  padding: 0 7px;
  border-bottom: 3px solid #36a9e1;
  background: #3b4453;
  white-space: nowrap;
}

.doc-tab svg {
  width: 9px;
  height: 9px;
}

.doc-tabs .menu {
  margin-left: auto;
}

/* status bar */
.status {
  flex: none;
  display: flex;
  align-items: center;
  height: 23px;
  padding-left: 1px;
  background: #2e3440;
}

.message {
  flex: 1;
}

.count {
  width: 39px;
  padding-left: 9px;
  border-left: 1px solid #e0e0e0;
  line-height: 21px;
}

.taskbar {
  flex: none;
  display: flex;
  height: 2px;
  padding-left: 48px;
  background: #262422;
}

.task-search {
  width: 288px;
  background: #f4f4f4;
}

.task-green {
  width: 23px;
  margin-left: 251px;
  background: #3f6b3a;
}

.task-active {
  width: 48px;
  margin-left: 71px;
  background: #4d4d4d;
}
```
